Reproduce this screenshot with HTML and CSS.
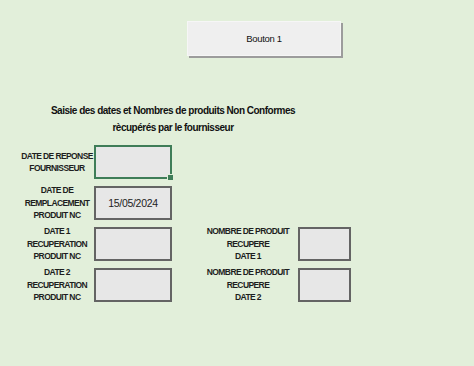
FILE: index.html
```html
<!DOCTYPE html>
<html lang="fr">
<head>
<meta charset="utf-8">
<link rel="stylesheet" href="styles.css">
</head>
<body>
<div class="page">
  <div class="btn">Bouton 1</div>
  <div class="title">Saisie des dates et Nombres de produits Non Conformes<br>rècupérés par le fournisseur</div>
  <div class="grid">
    <div class="label">DATE DE REPONSE<br>FOURNISSEUR</div>
    <div class="box selected"><span class="handle"></span></div>
    <div></div><div></div><div></div>

    <div class="label">DATE DE<br>REMPLACEMENT<br>PRODUIT NC</div>
    <div class="box">15/05/2024</div>
    <div></div><div></div><div></div>

    <div class="label">DATE 1<br>RECUPERATION<br>PRODUIT NC</div>
    <div class="box"></div>
    <div></div>
    <div class="label">NOMBRE DE PRODUIT<br>RECUPERE<br>DATE 1</div>
    <div class="box"></div>

    <div class="label">DATE 2<br>RECUPERATION<br>PRODUIT NC</div>
    <div class="box"></div>
    <div></div>
    <div class="label">NOMBRE DE PRODUIT<br>RECUPERE<br>DATE 2</div>
    <div class="box"></div>
  </div>
</div>
</body>
</html>
```
FILE: styles.css
```css
html, body {
  margin: 0;
  padding: 0;
  background: #e2efda;
  width: 474px;
  height: 366px;
  overflow: hidden;
}
.page {
  padding-top: 21px;
  font-family: "Liberation Sans", Arial, sans-serif;
  color: #1c1c1c;
}
.btn {
  margin-left: 187px;
  width: 154px;
  height: 35px;
  box-sizing: border-box;
  background: #efefef;
  border: 1px solid #f6f6f6;
  box-shadow: 2px 2px 0 #9c9c9c;
  display: flex;
  align-items: center;
  justify-content: center;
  font-size: 9.5px;
  letter-spacing: -0.3px;
  color: #111;
}
.title {
  margin-top: 46px;
  margin-left: 20px;
  width: 306px;
  text-align: center;
  font-weight: bold;
  font-size: 10px;
  letter-spacing: -0.5px;
  line-height: 17px;
  color: #111;
}
.grid {
  margin-top: 9px;
  margin-left: 20px;
  display: grid;
  grid-template-columns: 74px 78px 26px 100px 53px;
  grid-auto-rows: 34px;
  row-gap: 7px;
}
.label {
  display: flex;
  align-items: center;
  justify-content: center;
  text-align: center;
  font-weight: bold;
  font-size: 8.5px;
  letter-spacing: -0.6px;
  line-height: 12.5px;
  white-space: nowrap;
  color: #1e1e1e;
}
.box {
  position: relative;
  box-sizing: border-box;
  background: #e7e7e7;
  border: 2px solid #646464;
  display: flex;
  align-items: center;
  justify-content: center;
  font-size: 10.5px;
  letter-spacing: -0.3px;
  color: #222;
}
.box.selected {
  border-color: #3f7d58;
}
.handle {
  position: absolute;
  right: -4px;
  bottom: -4px;
  width: 5px;
  height: 5px;
  background: #3f7d58;
  border: 1px solid #e2efda;
}
```
